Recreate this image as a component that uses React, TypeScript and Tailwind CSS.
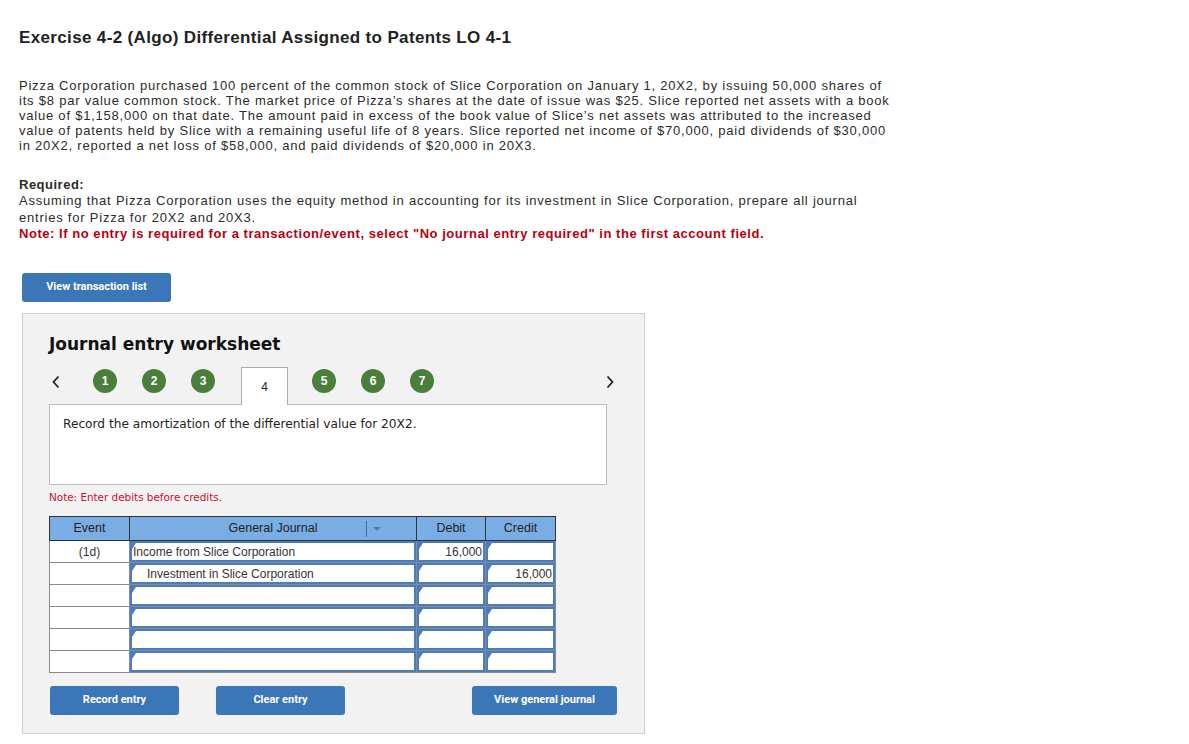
import React from 'react';

const bodyFont = { fontFamily: '"Liberation Sans", Arial, sans-serif' };

function Chevron({ dir }: { dir: 'left' | 'right' }) {
  return (
    <svg width="10" height="14" viewBox="0 0 10 14" className="text-[#222]">
      <path
        d={dir === 'left' ? 'M7.5 1.5 L2.5 7 L7.5 12.5' : 'M2.5 1.5 L7.5 7 L2.5 12.5'}
        fill="none"
        stroke="currentColor"
        strokeWidth="1.8"
      />
    </svg>
  );
}

function StepDot({ n }: { n: number }) {
  return (
    <div className="w-[24px] h-[24px] rounded-full bg-[#4a7f3b] text-white flex items-center justify-center text-[12px] font-bold [font-family:'Liberation_Sans',Arial,sans-serif]">
      {n}
    </div>
  );
}

function InputCell({ children, align = 'left', indent = false }: { children?: React.ReactNode; align?: 'left' | 'right'; indent?: boolean }) {
  return (
    <td className="border border-[#8a8a8a] p-0 h-[22px]">
      <div
        className={`relative h-[21px] border-2 border-[#4a7cc0] bg-white flex items-center text-[12px] text-[#333] ${
          align === 'right' ? 'justify-end pr-[1px]' : indent ? 'pl-[15px]' : 'pl-[1px]'
        }`}
      >
        <span className="absolute left-0 top-0 w-0 h-0 border-t-[6px] border-t-[#4a7cc0] border-r-[4px] border-r-transparent" />
        {children}
      </div>
    </td>
  );
}

export default function App() {
  const rows = [
    { event: '(1d)', account: 'Income from Slice Corporation', debit: '16,000', credit: '', indent: false },
    { event: '', account: 'Investment in Slice Corporation', debit: '', credit: '16,000', indent: true },
    { event: '', account: '', debit: '', credit: '', indent: false },
    { event: '', account: '', debit: '', credit: '', indent: false },
    { event: '', account: '', debit: '', credit: '', indent: false },
    { event: '', account: '', debit: '', credit: '', indent: false },
  ];

  return (
    <div className="min-h-[744px] bg-white pl-[19px] pt-[27px] text-[#2b2b2b]" style={bodyFont}>
      <h1 className="text-[17px] font-bold leading-[22px] text-[#222] tracking-[0.35px]">
        Exercise 4-2 (Algo) Differential Assigned to Patents LO 4-1
      </h1>

      <p className="mt-[29px] whitespace-nowrap text-[13px] leading-[15px] tracking-[0.78px]">
        Pizza Corporation purchased 100 percent of the common stock of Slice Corporation on January 1, 20X2, by issuing 50,000 shares of
        <br />
        its $8 par value common stock. The market price of Pizza’s shares at the date of issue was $25. Slice reported net assets with a book
        <br />
        value of $1,158,000 on that date. The amount paid in excess of the book value of Slice’s net assets was attributed to the increased
        <br />
        value of patents held by Slice with a remaining useful life of 8 years. Slice reported net income of $70,000, paid dividends of $30,000
        <br />
        in 20X2, reported a net loss of $58,000, and paid dividends of $20,000 in 20X3.
      </p>

      <div className="mt-[24px] text-[13px] leading-[16.3px] whitespace-nowrap tracking-[0.78px]">
        <div className="font-bold tracking-[0.5px]">Required:</div>
        <div>
          Assuming that Pizza Corporation uses the equity method in accounting for its investment in Slice Corporation, prepare all journal
          <br />
          entries for Pizza for 20X2 and 20X3.
        </div>
        <div className="font-bold text-[#b8000f] tracking-[0.54px]">
          Note: If no entry is required for a transaction/event, select "No journal entry required" in the first account field.
        </div>
      </div>

      <button className="mt-[31px] ml-[3px] w-[149px] h-[29px] rounded-[3px] bg-[#3b76b9] text-white text-[11px] font-bold tracking-normal [font-family:Roboto,Arial,sans-serif]">
        View transaction list
      </button>

      <div className="mt-[11px] ml-[3px] w-[623px] border border-[#cfcfcf] bg-[#f2f2f2] pl-[26px] pt-[20px] pb-[18px]">
        <h2 className="text-[17px] font-bold leading-[20px] text-[#111] [font-family:'DejaVu_Sans',Verdana,sans-serif]">
          Journal entry worksheet
        </h2>

        <div className="mt-[13px] flex items-start w-[558px] h-[38px]">
          <div className="flex items-center h-[24px] mt-[2px]">
            <div className="ml-[2px] pt-[2px]"><Chevron dir="left" /></div>
            <div className="ml-[32px] flex gap-[25px]">
              <StepDot n={1} />
              <StepDot n={2} />
              <StepDot n={3} />
            </div>
          </div>
          <div className="ml-[26px] w-[47px] h-[38px] relative z-10 border border-b-0 border-[#ababab] bg-white flex items-center justify-center text-[12px] text-[#222] [font-family:'Liberation_Sans',Arial,sans-serif]">
            4
          </div>
          <div className="flex items-center h-[24px] mt-[2px] ml-[24px] gap-[25px]">
            <StepDot n={5} />
            <StepDot n={6} />
            <StepDot n={7} />
          </div>
          <div className="ml-auto h-[24px] mt-[2px] flex items-center">
            <div className="pt-[2px] mr-[-8px]"><Chevron dir="right" /></div>
          </div>
        </div>

        <div className="-mt-[1px] w-[558px] h-[81px] border border-[#bdbdbd] bg-white pl-[13px] pt-[11px] text-[12.2px] leading-[16px] text-[#222] [font-family:'DejaVu_Sans',Verdana,sans-serif]">
          Record the amortization of the differential value for 20X2.
        </div>

        <div className="mt-[6px] text-[10.4px] leading-[13px] text-[#c8102e] [font-family:'DejaVu_Sans',Verdana,sans-serif]">
          Note: Enter debits before credits.
        </div>

        <table className="mt-[12px] border-collapse bg-white text-[12px] [font-family:'Liberation_Sans',Arial,sans-serif]">
          <thead>
            <tr className="bg-[#7aade4] text-[#222] h-[24px] text-[12.5px]">
              <th className="w-[80px] border border-[#333] font-normal">Event</th>
              <th className="w-[287px] border border-[#333] font-normal relative">
                General Journal
                <span className="absolute left-[236px] top-[4px] h-[16px] w-px bg-[#3a6db3]" />
                <span className="absolute left-[243px] top-[10px] w-0 h-0 border-l-[4px] border-r-[4px] border-t-[4px] border-l-transparent border-r-transparent border-t-[#4a7cc0]" />
              </th>
              <th className="w-[69px] border border-[#333] font-normal">Debit</th>
              <th className="w-[70px] border border-[#333] font-normal">Credit</th>
            </tr>
          </thead>
          <tbody>
            {rows.map((r, i) => (
              <tr key={i} className="h-[22px]">
                <td className="border border-[#8a8a8a] text-center text-[#333] p-0">{r.event}</td>
                <InputCell indent={r.indent}>{r.account}</InputCell>
                <InputCell align="right">{r.debit}</InputCell>
                <InputCell align="right">{r.credit}</InputCell>
              </tr>
            ))}
          </tbody>
        </table>

        <div className="mt-[13px] flex items-center [font-family:Roboto,Arial,sans-serif] text-[11px] font-bold text-white">
          <button className="ml-[1px] w-[129px] h-[29px] rounded-[3px] bg-[#3b76b9]">Record entry</button>
          <button className="ml-[37px] w-[129px] h-[29px] rounded-[3px] bg-[#3b76b9]">Clear entry</button>
          <button className="ml-[127px] w-[145px] h-[29px] rounded-[3px] bg-[#3b76b9]">View general journal</button>
        </div>
      </div>
    </div>
  );
}
